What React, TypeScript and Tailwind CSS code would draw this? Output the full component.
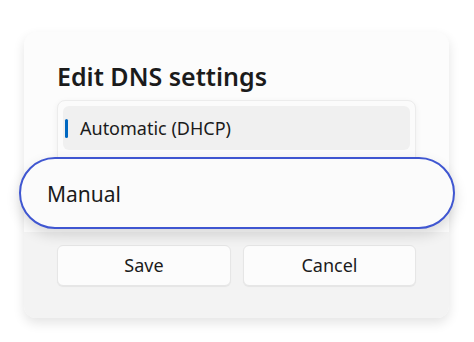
export default function App() {
  return (
    <div
      className="relative w-[474px] h-[342px] bg-white pt-[32px] pl-[24px] overflow-hidden"
      style={{ fontFamily: '"Noto Sans", "Open Sans", sans-serif' }}
    >
      {/* Dialog card */}
      <div className="w-[425px] h-[286px] rounded-xl bg-[#fcfcfc] shadow-[0_5px_12px_rgba(0,0,0,0.11)] overflow-hidden flex flex-col">
        <div className="h-[200px] px-[33px] pt-[28px]">
          <h1 className="text-[25px] leading-[32px] font-semibold text-[#1b1b1b]">Edit DNS settings</h1>

          {/* Dropdown list */}
          <div className="mt-[8px] w-[359px] rounded-lg border border-[#ececec] bg-[#fbfbfb] p-[5px] shadow-[0_2px_6px_rgba(0,0,0,0.06)]">
            <div className="relative h-[44px] rounded-md bg-[#f0f0f0] flex items-center pl-[17px]">
              <span className="absolute left-[2px] top-[13px] w-[3px] h-[19px] rounded-full bg-[#0067c0]" />
              <span className="text-[18px] text-[#1b1b1b]">Automatic (DHCP)</span>
            </div>
            <div className="h-[44px]" />
          </div>
        </div>

        {/* Footer */}
        <div className="flex-1 bg-[#f3f3f3] px-[33px] pt-[13px] flex gap-[12px]">
          <button className="w-[174px] h-[41px] rounded-md bg-[#fcfcfc] border border-[#e6e6e6] text-[18px] text-[#1b1b1b] shadow-[0_1px_1px_rgba(0,0,0,0.06)]">
            Save
          </button>
          <button className="w-[173px] h-[41px] rounded-md bg-[#fcfcfc] border border-[#e6e6e6] text-[18px] text-[#1b1b1b] shadow-[0_1px_1px_rgba(0,0,0,0.06)]">
            Cancel
          </button>
        </div>
      </div>

      {/* Highlighted option */}
      <div className="absolute left-[19px] top-[157px] w-[436px] h-[72px] rounded-full border-2 border-[#3f56d1] bg-[#fbfbfb] shadow-[0_6px_14px_rgba(0,0,0,0.14)] flex items-center pl-[26px] pt-[3px]">
        <span className="text-[21px] text-[#1b1b1b]">Manual</span>
      </div>
    </div>
  );
}
